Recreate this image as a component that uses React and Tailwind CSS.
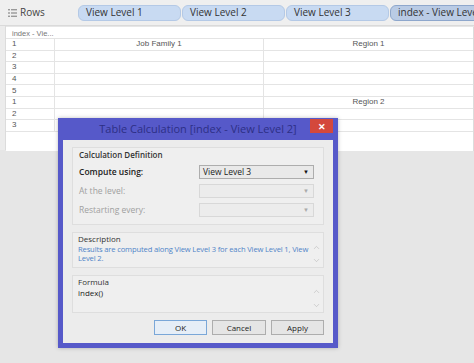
import { ChevronUp, ChevronDown } from "lucide-react";

const pills = ["View Level 1", "View Level 2", "View Level 3"];

const rows = [
  { n: "1", a: "Job Family 1", b: "Region 1" },
  { n: "2" },
  { n: "3" },
  { n: "4" },
  { n: "5" },
  { n: "1", b: "Region 2" },
  { n: "2" },
  { n: "3" },
];

function Select({ value, disabled }) {
  return (
    <div
      className={`w-[115px] h-[14px] flex items-center justify-between pl-[3px] pr-[4px] border ${
        disabled ? "border-[#d8d8d8] bg-[#ececec]" : "border-[#adadad] bg-[#e9e9e9]"
      }`}
    >
      <span className="text-[8.5px] text-[#222]">{value}</span>
      <span className={`text-[6px] ${disabled ? "text-[#aaa]" : "text-[#111]"}`}>▼</span>
    </div>
  );
}

function Scroller() {
  return (
    <div className="flex flex-col justify-between items-center h-full py-[2px] text-[#b5b5b5]">
      <ChevronUp size={9} strokeWidth={1.5} />
      <ChevronDown size={9} strokeWidth={1.5} />
    </div>
  );
}

export default function App() {
  return (
    <div
      className="relative w-[474px] h-[363px] overflow-hidden bg-[#e6e6e6]"
      style={{ fontFamily: "'Open Sans', 'Noto Sans', sans-serif" }}
    >
      {/* shelf */}
      <div className="h-[26px] bg-[#efefef] border-b border-[#dadada] flex items-center">
        <div className="shrink-0 w-[78px] flex items-center pl-[8px] gap-[3px] text-[10px] text-[#444]">
          <svg width="9" height="8" viewBox="0 0 9 8" className="text-[#999]">
            <rect x="0" y="0" width="2" height="1.4" fill="currentColor" />
            <rect x="3" y="0" width="6" height="1.4" fill="currentColor" />
            <rect x="0" y="3.3" width="2" height="1.4" fill="currentColor" />
            <rect x="3" y="3.3" width="6" height="1.4" fill="currentColor" />
            <rect x="0" y="6.6" width="2" height="1.4" fill="currentColor" />
            <rect x="3" y="6.6" width="6" height="1.4" fill="currentColor" />
          </svg>
          <span>Rows</span>
        </div>
        {pills.map((p) => (
          <div
            key={p}
            className="shrink-0 w-[103px] h-[16px] mr-[1px] rounded-[6px] bg-[#c8daf2] border border-[#b4c9e6] flex items-center pl-[7px] text-[10px] text-[#333]"
          >
            {p}
          </div>
        ))}
        <div className="shrink-0 w-[110px] h-[16px] rounded-[6px] bg-[#b9cbe5] border border-[#8ea7cc] flex items-center pl-[7px] text-[10px] text-[#333] whitespace-nowrap">
          index - View Level 2
        </div>
      </div>

      {/* view */}
      <div className="flex">
        <div className="w-[6px] h-[124px] bg-[#ececec] border-r border-[#dcdcdc]" />
        <div
          className="flex-1 h-[124px] bg-white mt-[1px] border-r border-[#dcdcdc]"
          style={{ fontFamily: "'Liberation Sans', Arial, sans-serif" }}
        >
          <div className="h-[11px] pl-[6px] pt-[3px] text-[7.5px] text-[#777] leading-none">
            index - Vie...
          </div>
          <div className="border-t border-[#e4e4e4]">
            {rows.map((r, i) => (
              <div
                key={i}
                className="flex h-[11.6px] border-b border-[#e4e4e4] text-[8px] text-[#555] leading-none"
              >
                <div className="w-[49px] pl-[6px] flex items-center border-r border-[#e4e4e4]">
                  {r.n}
                </div>
                <div className="w-[209px] flex items-center justify-center border-r border-[#e4e4e4]">
                  {r.a}
                </div>
                <div className="flex-1 flex items-center justify-center">{r.b}</div>
              </div>
            ))}
          </div>
        </div>
      </div>

      {/* dialog */}
      <div className="absolute left-[58px] top-[118px] w-[280px] h-[230px] bg-[#5659c9] flex flex-col px-[5px] pb-[5px] shadow-[0_0_4px_rgba(0,0,0,0.25)]">
        <div className="relative h-[22px] flex items-center justify-center text-[11px] text-[#2d2f85]">
          Table Calculation [index - View Level 2]
          <div className="absolute right-[0px] top-[1px] w-[23px] h-[14px] bg-[#d4483c] flex items-center justify-center text-white text-[9px] font-bold leading-none">
            ✕
          </div>
        </div>
        <div className="flex-1 bg-[#ececec] px-[9px] pt-[7px] flex flex-col text-[8.5px] text-[#222]">
          {/* calculation definition */}
          <div className="h-[78px] border border-[#dedede] bg-[#efefef] px-[6px] pt-[1px]">
            <div className="font-semibold text-[8px] text-[#333] leading-[11px]">Calculation Definition</div>
            <div className="mt-[5px] flex flex-col gap-[5px]">
              <div className="flex items-center justify-between pr-[3px]">
                <span className="font-semibold text-[#222]">Compute using:</span>
                <Select value="View Level 3" />
              </div>
              <div className="flex items-center justify-between pr-[3px]">
                <span className="text-[#a0a0a0]">At the level:</span>
                <Select disabled />
              </div>
              <div className="flex items-center justify-between pr-[3px]">
                <span className="text-[#a0a0a0]">Restarting every:</span>
                <Select disabled />
              </div>
            </div>
          </div>

          {/* description */}
          <div className="mt-[7px] h-[36px] border border-[#dedede] bg-[#efefef] pl-[5px] pr-[2px] flex">
            <div className="flex-1 pt-[1px]">
              <div className="text-[8px] text-[#333] leading-[10px]">Description</div>
              <div className="text-[7.6px] tracking-[-0.15px] text-[#4f84c8] leading-[9px] mt-[1px]">
                Results are computed along View Level 3 for each View Level 1, View Level 2.
              </div>
            </div>
            <div className="w-[9px] shrink-0 pt-[8px] h-full">
              <Scroller />
            </div>
          </div>

          {/* formula */}
          <div className="mt-[7px] h-[38px] border border-[#dedede] bg-[#efefef] pl-[5px] pr-[2px] flex">
            <div className="flex-1 pt-[1px]">
              <div className="text-[8px] text-[#333] leading-[10px]">Formula</div>
              <div className="text-[8px] text-[#222] leading-[10px] mt-[1px]">index()</div>
            </div>
            <div className="w-[9px] shrink-0 pt-[9px] h-full">
              <Scroller />
            </div>
          </div>

          {/* buttons */}
          <div className="mt-[7px] flex justify-end gap-[5px]">
            <div className="w-[53px] h-[15px] border border-[#7aa7d8] bg-[#e6eef7] flex items-center justify-center text-[8px]">
              OK
            </div>
            <div className="w-[54px] h-[15px] border border-[#adadad] bg-[#e5e5e5] flex items-center justify-center text-[8px]">
              Cancel
            </div>
            <div className="w-[53px] h-[15px] border border-[#adadad] bg-[#e5e5e5] flex items-center justify-center text-[8px]">
              Apply
            </div>
          </div>
        </div>
      </div>
    </div>
  );
}
